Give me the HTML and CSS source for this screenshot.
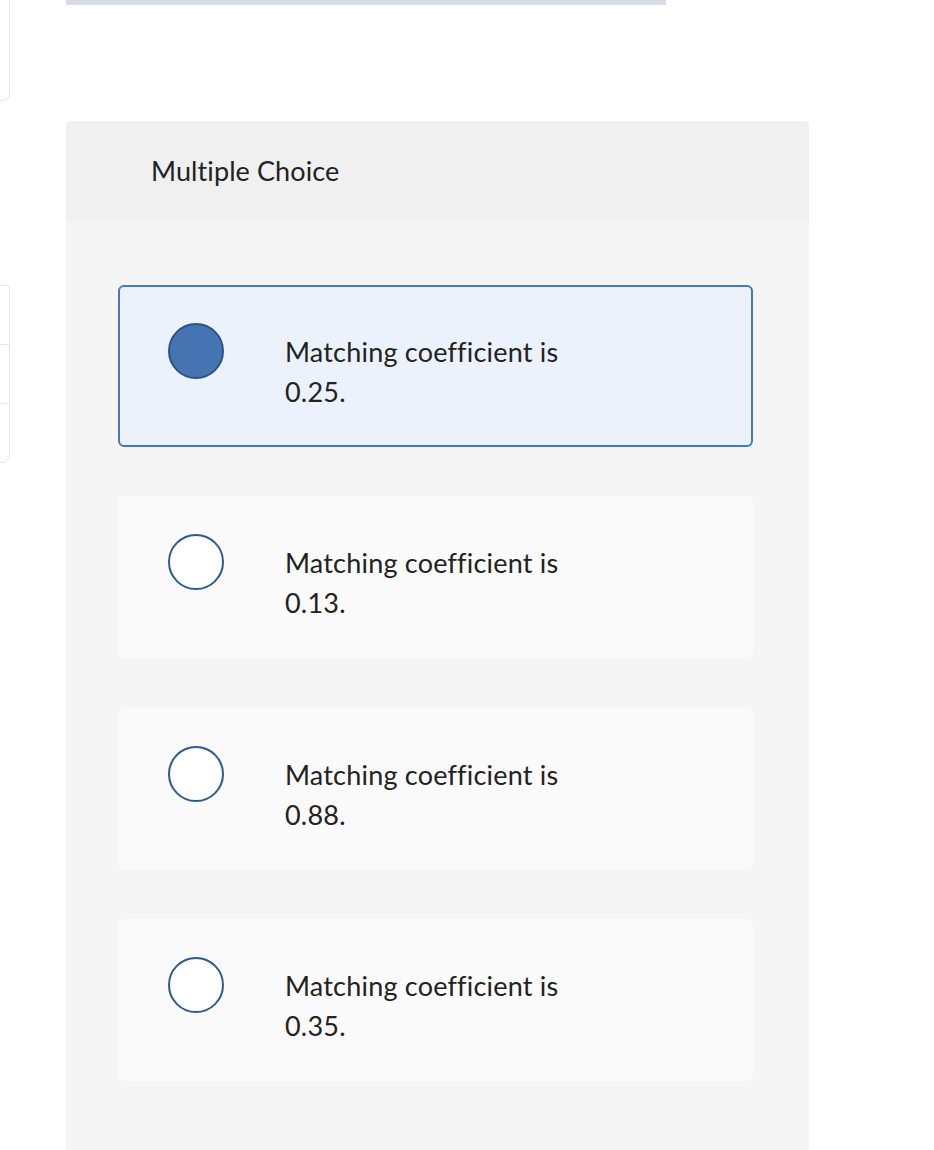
FILE: index.html
```html
<!DOCTYPE html>
<html lang="en">
<head>
<meta charset="utf-8">
<title>Multiple Choice</title>
<link rel="stylesheet" href="styles.css">
</head>
<body>
<div class="page">
  <aside class="rail">
    <div class="rail-box"></div>
    <div class="rail-group">
      <div class="rail-item"></div>
      <div class="rail-item"></div>
      <div class="rail-item"></div>
    </div>
  </aside>
  <main class="main">
    <div class="progress"></div>
    <section class="question">
      <header class="question-head">Multiple Choice</header>
      <div class="question-body">
        <div class="option selected">
          <span class="radio checked"></span>
          <span class="option-text">Matching coefficient is<br>0.25.</span>
        </div>
        <div class="option">
          <span class="radio"></span>
          <span class="option-text">Matching coefficient is<br>0.13.</span>
        </div>
        <div class="option">
          <span class="radio"></span>
          <span class="option-text">Matching coefficient is<br>0.88.</span>
        </div>
        <div class="option">
          <span class="radio"></span>
          <span class="option-text">Matching coefficient is<br>0.35.</span>
        </div>
      </div>
    </section>
  </main>
</div>
</body>
</html>
```
FILE: styles.css
```css
html, body {
  margin: 0;
  padding: 0;
  background: #ffffff;
}
body {
  font-family: "Lato", "Liberation Sans", sans-serif;
  font-variant-ligatures: none;
  color: #222222;
  overflow: hidden;
  height: 1150px;
}
.page {
  display: flex;
  align-items: flex-start;
}
.rail {
  width: 10px;
  flex: none;
  display: flex;
  flex-direction: column;
}
.rail-box {
  margin-left: -40px;
  margin-top: -20px;
  width: 48px;
  height: 119px;
  border: 1px solid #e6e6e6;
  border-radius: 0 0 8px 0;
}
.rail-group {
  margin-top: 184px;
  margin-left: -40px;
  width: 48px;
  border: 1px solid #e6e6e6;
  border-radius: 0 3px 8px 0;
  display: flex;
  flex-direction: column;
}
.rail-item {
  height: 58px;
}
.rail-item + .rail-item {
  border-top: 1px solid #e6e6e6;
}
.main {
  margin-left: 56px;
  display: flex;
  flex-direction: column;
}
.progress {
  width: 600px;
  height: 5px;
  background: #d8dce5;
}
.question {
  margin-top: 116px;
  width: 743px;
  border-radius: 4px 4px 0 0;
  overflow: hidden;
  background: #f5f5f5;
}
.question-head {
  height: 100px;
  box-sizing: border-box;
  background: #f0f0f0;
  padding: 34px 0 0 85px;
  font-size: 27px;
  line-height: 32px;
  letter-spacing: 0.1px;
}
.question-body {
  padding: 64px 56px 80px 52px;
  display: flex;
  flex-direction: column;
  gap: 49.4px;
}
.option {
  height: 162px;
  box-sizing: border-box;
  display: flex;
  align-items: flex-start;
  padding: 36px 40px 0 48px;
  background: #fafafa;
  border: 2px solid transparent;
  border-radius: 6px;
}
.option.selected {
  background: #ebf2fb;
  border-color: #4a77bb;
}
.radio {
  flex: none;
  width: 56px;
  height: 56px;
  box-sizing: border-box;
  border-radius: 50%;
  border: 2px solid #2e5a8e;
  background: #ffffff;
}
.radio.checked {
  background: #4674b2;
  border-color: #2c5388;
}
.option-text {
  margin-left: 61px;
  margin-top: 9px;
  font-size: 27px;
  line-height: 40px;
  letter-spacing: 0.2px;
}
```
